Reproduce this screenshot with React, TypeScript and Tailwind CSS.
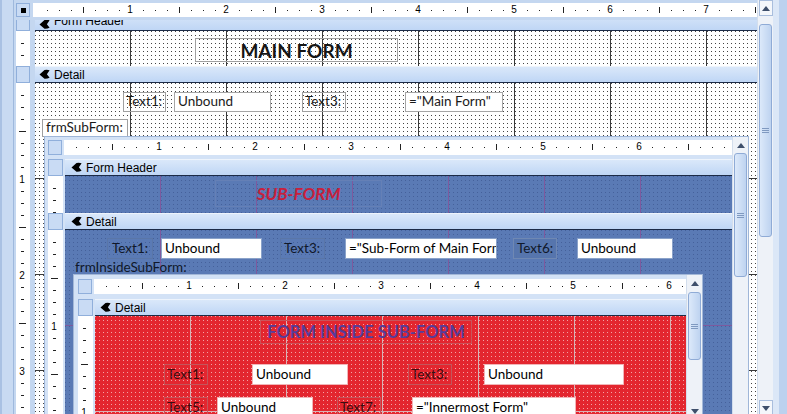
import React from 'react';

const BAR_FONT = "font-['Liberation_Sans',Arial,sans-serif]";
const CTRL_FONT = "font-['Lato','Liberation_Sans',sans-serif]";

// design surfaces: 1 inch = 96px, dots every 4px
const MAIN_GRID =
  "bg-white bg-[image:linear-gradient(to_right,transparent_95px,#3a3a3a_95px),linear-gradient(to_bottom,transparent_95px,#3a3a3a_95px),radial-gradient(circle_at_0.5px_0.5px,#444_0.75px,transparent_0.75px)] bg-[length:96px_96px,96px_96px,4px_4px]";
const SUB_GRID =
  "bg-[#5a7ab5] bg-[image:linear-gradient(to_right,transparent_95px,#7d5a9e_95px),linear-gradient(to_bottom,transparent_95px,#7d5a9e_95px),radial-gradient(circle_at_0.5px_0.5px,#45619b_0.75px,transparent_0.75px)] bg-[length:96px_96px,96px_96px,4px_4px]";
const RED_GRID =
  "bg-[#e3262f] bg-[image:linear-gradient(to_right,transparent_95px,#d6b3b6_95px),linear-gradient(to_bottom,transparent_95px,#d6b3b6_95px),radial-gradient(circle_at_0.5px_0.5px,#f3a3a6_0.75px,transparent_0.75px)] bg-[length:96px_96px,96px_96px,4px_4px]";

function HRuler({ width, origin = 0 }: { width: number; origin?: number }) {
  const marks: React.ReactNode[] = [];
  for (let i = 1; origin + i * 12 < width; i++) {
    const x = origin + i * 12;
    if (i % 8 === 0) {
      marks.push(
        <text key={i} x={x - 1} y={10} fontSize={10} textAnchor="middle" fontFamily="Liberation Sans, Arial, sans-serif" fill="#000">
          {i / 8}
        </text>
      );
    } else if (i % 4 === 0) {
      marks.push(<rect key={i} x={x} y={4} width={1} height={6} fill="#222" />);
    } else {
      marks.push(<rect key={i} x={x} y={7} width={1} height={1} fill="#222" />);
    }
  }
  return (
    <svg width={width} height={14} className="block">
      {marks}
    </svg>
  );
}

function VRuler({ height }: { height: number }) {
  const marks: React.ReactNode[] = [];
  for (let i = 1; i * 12 < height; i++) {
    const y = i * 12;
    if (i % 8 === 0) {
      marks.push(
        <text key={i} x={6} y={y + 4} fontSize={10} textAnchor="middle" fontFamily="Liberation Sans, Arial, sans-serif" fill="#000">
          {i / 8}
        </text>
      );
    } else if (i % 4 === 0) {
      marks.push(<rect key={i} x={3} y={y} width={7} height={1} fill="#222" />);
    } else {
      marks.push(<rect key={i} x={5} y={y} width={3} height={1} fill="#222" />);
    }
  }
  return (
    <svg width={14} height={height} className="block">
      {marks}
    </svg>
  );
}

function Selector() {
  return <div className="bg-[#c9dbf4] border border-[#90afdb]" />;
}

function Corner({ dark = false }: { dark?: boolean }) {
  return (
    <div className="w-[14px] h-full shrink-0 bg-[#c9dbf4] border border-[#90afdb] flex items-center justify-center">
      {dark && <div className="w-[5px] h-[5px] bg-black" />}
    </div>
  );
}

function SectionIcon() {
  return (
    <svg width="11" height="11" viewBox="0 0 11 11" className="shrink-0">
      <path d="M0.5 5.5 L5.5 1 Q8 0.3 10.6 1.2 L7.9 5.3 L10.6 8.8 Q8 10 5.5 9.8 Z" fill="#000" />
    </svg>
  );
}

function SectionBar({ label, pad = 'pl-[4px]', text = '' }: { label: string; pad?: string; text?: string }) {
  return (
    <div
      className={`bg-[linear-gradient(to_bottom,#dae8fa,#bfd6f5)] border-t border-t-[#eef4fc] border-b border-b-[#1c2b47] flex gap-[4px] text-[12px] text-black ${pad} ${BAR_FONT} ${text || 'items-center'}`}
    >
      <SectionIcon />
      <span>{label}</span>
    </div>
  );
}

function Grip() {
  return (
    <div className="flex flex-col gap-[1px]">
      <div className="w-[7px] h-px bg-[#7f99c0]" />
      <div className="w-[7px] h-px bg-[#7f99c0]" />
      <div className="w-[7px] h-px bg-[#7f99c0]" />
    </div>
  );
}

function UpArrow() {
  return (
    <svg width="8" height="5" viewBox="0 0 8 5">
      <path d="M0 5 L4 0 L8 5 Z" fill="#3e4f6b" />
    </svg>
  );
}

function DownArrow() {
  return (
    <svg width="8" height="5" viewBox="0 0 8 5">
      <path d="M0 0 L4 5 L8 0 Z" fill="#3e4f6b" />
    </svg>
  );
}

function ScrollBar({
  boxed = false,
  thumbClass,
  downClass,
}: {
  boxed?: boolean;
  thumbClass: string;
  downClass?: string;
}) {
  const btn = boxed
    ? 'h-[16px] w-[14px] shrink-0 flex items-center justify-center border border-[#a9bedd] bg-[#f4f7fb]'
    : 'h-[16px] w-[14px] shrink-0 flex items-center justify-center';
  return (
    <div className="w-[16px] shrink-0 flex flex-col items-center bg-[#eef2f8] border-l border-l-[#d3deed]">
      <div className={btn}>
        <UpArrow />
      </div>
      <div
        className={`w-[13px] shrink-0 rounded-[3px] border border-[#8fabd6] bg-[linear-gradient(to_right,#dce9fa,#bed3f0)] flex items-center justify-center ${thumbClass}`}
      >
        <Grip />
      </div>
      {downClass && (
        <div className={`${btn} ${downClass}`}>
          <DownArrow />
        </div>
      )}
    </div>
  );
}

function Ctl({ className, children }: { className: string; children?: React.ReactNode }) {
  return (
    <div className={`absolute flex items-center whitespace-nowrap overflow-hidden leading-none ${CTRL_FONT} ${className}`}>
      {children}
    </div>
  );
}

function InnerForm() {
  return (
    <div className="absolute left-[8px] top-[44px] w-[630px] h-[200px] border border-[#a3b8d8] bg-[#d3e2f6] flex">
      <div className="flex-1 min-w-0 pl-[4px] pt-[4px] flex flex-col">
        <div className="h-[15px] flex gap-[2px] shrink-0">
          <Corner />
          <div className="flex-1 bg-white overflow-hidden">
            <HRuler width={591} />
          </div>
        </div>
        <div className="mt-[5px] grid grid-cols-[15px_1fr] gap-x-[2px] grid-rows-[17px_200px]">
          <Selector />
          <SectionBar label="Detail" pad="pl-[5px]" />
          <div className="bg-white">
            <VRuler height={200} />
          </div>
          <div className={`${RED_GRID} relative`}>
            <Ctl className="left-[165px] top-[4px] w-[212px] h-[24px] justify-center border border-[#c9545b] text-[16.5px] font-bold text-[#563c9a]">
              FORM INSIDE SUB-FORM
            </Ctl>
            <Ctl className="left-[69px] top-[48px] w-[44px] h-[21px] pl-[2px] border border-[#c4555b] text-[13.5px] text-[#3a0d10]">
              Text1:
            </Ctl>
            <Ctl className="left-[157px] top-[48px] w-[96px] h-[21px] pl-[3px] bg-white border border-[#f1b5b8] text-[13.5px] text-black">
              Unbound
            </Ctl>
            <Ctl className="left-[313px] top-[48px] w-[44px] h-[21px] pl-[2px] border border-[#c4555b] text-[13.5px] text-[#3a0d10]">
              Text3:
            </Ctl>
            <Ctl className="left-[389px] top-[48px] w-[140px] h-[21px] pl-[3px] bg-white border border-[#f1b5b8] text-[13.5px] text-black">
              Unbound
            </Ctl>
            <Ctl className="left-[69px] top-[81px] w-[44px] h-[21px] pl-[2px] border border-[#c4555b] text-[13.5px] text-[#3a0d10]">
              Text5:
            </Ctl>
            <Ctl className="left-[122px] top-[81px] w-[96px] h-[21px] pl-[3px] bg-white border border-[#f1b5b8] text-[13.5px] text-black">
              Unbound
            </Ctl>
            <Ctl className="left-[242px] top-[81px] w-[44px] h-[21px] pl-[2px] border border-[#c4555b] text-[13.5px] text-[#3a0d10]">
              Text7:
            </Ctl>
            <Ctl className="left-[317px] top-[81px] w-[164px] h-[21px] pl-[3px] bg-white border border-[#f1b5b8] text-[13.5px] text-black">
              ="Innermost Form"
            </Ctl>
          </div>
        </div>
      </div>
      <ScrollBar thumbClass="mt-[1px] h-[68px]" downClass="mt-[43px]" />
    </div>
  );
}

function SubForm() {
  return (
    <div className="absolute left-[9px] top-[53px] w-[705px] h-[330px] border border-[#9fb6d8] bg-[#d3e2f6] flex">
      <div className="flex-1 min-w-0 pl-[3px] pt-[3px] flex flex-col">
        <div className="h-[15px] flex gap-[2px] shrink-0">
          <Corner />
          <div className="flex-1 bg-white overflow-hidden">
            <HRuler width={667} />
          </div>
        </div>
        <div className="mt-[4px] grid grid-cols-[15px_1fr] gap-x-[2px] grid-rows-[17px_37px_17px_300px]">
          <Selector />
          <SectionBar label="Form Header" pad="pl-[6px]" />
          <div className="bg-white">
            <VRuler height={37} />
          </div>
          <div className={`${SUB_GRID} relative`}>
            <Ctl className="left-[150px] top-[4px] w-[167px] h-[27px] justify-center border border-[#6580b6] text-[17px] font-bold italic text-[#c8203c]">
              SUB-FORM
            </Ctl>
          </div>
          <Selector />
          <SectionBar label="Detail" pad="pl-[6px]" />
          <div className="bg-white">
            <VRuler height={300} />
          </div>
          <div className={`${SUB_GRID} relative`}>
            <Ctl className="left-[42px] top-[8px] w-[46px] h-[21px] pl-[4px] border border-[#5a76a8] text-[13.5px] text-[#10182a]">
              Text1:
            </Ctl>
            <Ctl className="left-[96px] top-[8px] w-[101px] h-[21px] pl-[3px] bg-white border border-[#8aa2c9] text-[13.5px] text-black">
              Unbound
            </Ctl>
            <Ctl className="left-[215px] top-[8px] w-[45px] h-[21px] pl-[3px] border border-[#5a76a8] text-[13.5px] text-[#10182a]">
              Text3:
            </Ctl>
            <Ctl className="left-[280px] top-[8px] w-[152px] h-[21px] pl-[3px] bg-white border border-[#8aa2c9] text-[13.5px] text-black">
              ="Sub-Form of Main Form"
            </Ctl>
            <Ctl className="left-[448px] top-[8px] w-[44px] h-[21px] pl-[3px] bg-[#5675ad] border border-[#6f88b3] text-[13.5px] text-[#10182a]">
              Text6:
            </Ctl>
            <Ctl className="left-[512px] top-[8px] w-[96px] h-[21px] pl-[3px] bg-white border border-[#8aa2c9] text-[13.5px] text-black">
              Unbound
            </Ctl>
            <Ctl className="left-[10px] top-[31px] h-[14px] text-[13.5px] text-[#10182a]">frmInsideSubForm:</Ctl>
            <InnerForm />
          </div>
        </div>
      </div>
      <ScrollBar thumbClass="mt-[0px] h-[124px]" />
    </div>
  );
}

export default function App() {
  return (
    <div className="w-[787px] h-[414px] overflow-hidden flex bg-[#c4d7f0] select-none">
      {/* left window edge */}
      <div className="w-[14px] shrink-0 bg-[#c8daf2] border-l-[2px] border-l-[#a9c1e3] border-r border-r-[#9fb9dd]" />

      {/* design area */}
      <div className="w-[743px] shrink-0 flex flex-col pt-[3px] pl-[2px]">
        <div className="h-[14px] flex gap-[3px] shrink-0">
          <Corner dark />
          <div className="flex-1 bg-white overflow-hidden">
            <HRuler width={724} origin={2} />
          </div>
        </div>
        <div className="mt-[3px] flex-1 overflow-hidden">
          {/* view is scrolled a little, the Form Header bar is half hidden */}
          <div className="-mt-[9px] grid grid-cols-[14px_722px] gap-x-[5px] grid-rows-[20px_35px_17px_340px]">
            <Selector />
            <SectionBar label="Form Header" text="items-end" />
            <div className="bg-white">
              <VRuler height={35} />
            </div>
            <div className={`${MAIN_GRID} relative`}>
              <Ctl className="left-[160px] top-[7px] w-[203px] h-[24px] justify-center border border-[#a0a0a0] text-[19px] font-bold text-[#151515]">
                MAIN FORM
              </Ctl>
            </div>
            <Selector />
            <SectionBar label="Detail" />
            <div className="bg-white">
              <VRuler height={340} />
            </div>
            <div className={`${MAIN_GRID} relative`}>
              <Ctl className="left-[88px] top-[9px] w-[43px] h-[20px] pl-[2px] border border-[#a0a0a0] text-[13.5px] text-[#1a1a1a]">
                Text1:
              </Ctl>
              <Ctl className="left-[139px] top-[9px] w-[97px] h-[20px] pl-[3px] bg-white border border-[#a6a6a6] text-[13.5px] text-[#1a1a1a]">
                Unbound
              </Ctl>
              <Ctl className="left-[267px] top-[9px] w-[44px] h-[20px] pl-[2px] border border-[#a0a0a0] text-[13.5px] text-[#1a1a1a]">
                Text3:
              </Ctl>
              <Ctl className="left-[370px] top-[9px] w-[98px] h-[20px] pl-[3px] bg-white border border-[#a6a6a6] text-[13.5px] text-[#1a1a1a]">
                ="Main Form"
              </Ctl>
              <Ctl className="left-[7px] top-[36px] w-[86px] h-[18px] pl-[3px] bg-white border border-[#a0a0a0] text-[13.5px] text-[#1a1a1a]">
                frmSubForm:
              </Ctl>
              <SubForm />
            </div>
          </div>
        </div>
      </div>

      <ScrollBar boxed thumbClass="mt-[8px] h-[213px]" downClass="mt-[163px]" />

      {/* right window edge */}
      <div className="w-[14px] shrink-0 bg-[#bcd1ee] border-l-[6px] border-l-[#dbe7f7]" />
    </div>
  );
}
